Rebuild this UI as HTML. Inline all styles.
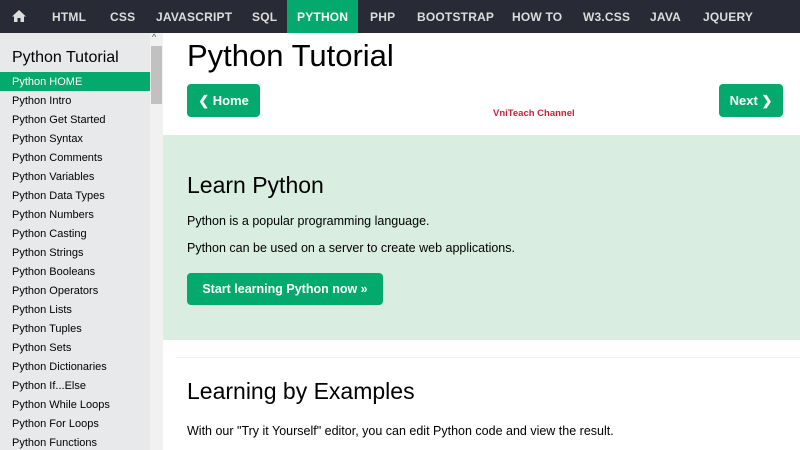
<!DOCTYPE html>
<html><head><meta charset="utf-8"><style>
*{margin:0;padding:0;box-sizing:border-box}
body{width:800px;height:450px;overflow:hidden;background:#fff;font-family:"Liberation Sans",sans-serif;position:relative;color:#000}
.nav{position:absolute;left:0;top:0;width:800px;height:33px;background:#282A35}
.nav span{position:absolute;top:10px;color:#ddd;font-weight:bold;font-size:12px;letter-spacing:0.2px}
.nav .act{position:absolute;left:287px;top:0;width:71px;height:33px;background:#04AA6D}
.side{position:absolute;left:0;top:33px;width:150px;height:417px;background:#E7E9EB}
.side div{position:absolute;left:12px;font-size:11px;color:#000}
.scroll{position:absolute;left:150px;top:33px;width:13px;height:417px;background:#f1f1f1}
.thumb{position:absolute;left:151px;top:46px;width:11px;height:58px;background:#c1c1c1}
.btn{position:absolute;background:#04AA6D;color:#fff;font-weight:bold;border-radius:4px;font-size:13px;text-align:center}
.abs{position:absolute}
</style></head><body>
<div class="nav">
<div class="act"></div>
<svg class="abs" style="left:11px;top:9px" width="16" height="14" viewBox="0 0 16 14"><path d="M8 1L1 7.5h2V13h3.5V9h3v4H13V7.5h2z" fill="#ddd"/></svg>
<span style="left:52px">HTML</span>
<span style="left:110px">CSS</span>
<span style="left:156px">JAVASCRIPT</span>
<span style="left:252px">SQL</span>
<span style="left:297px;color:#fff">PYTHON</span>
<span style="left:370px">PHP</span>
<span style="left:417px">BOOTSTRAP</span>
<span style="left:512px">HOW TO</span>
<span style="left:583px">W3.CSS</span>
<span style="left:650px">JAVA</span>
<span style="left:703px">JQUERY</span>
</div>
<div class="side">
<div style="top:16px;font-size:16px">Python Tutorial</div>
<div style="left:0;top:39px;width:150px;height:19px;background:#04AA6D"></div>
<div style="top:43px;color:#fff">Python HOME</div>
<div style="top:62px">Python Intro</div>
<div style="top:81px">Python Get Started</div>
<div style="top:100px">Python Syntax</div>
<div style="top:119px">Python Comments</div>
<div style="top:138px">Python Variables</div>
<div style="top:157px">Python Data Types</div>
<div style="top:176px">Python Numbers</div>
<div style="top:195px">Python Casting</div>
<div style="top:214px">Python Strings</div>
<div style="top:233px">Python Booleans</div>
<div style="top:252px">Python Operators</div>
<div style="top:271px">Python Lists</div>
<div style="top:290px">Python Tuples</div>
<div style="top:309px">Python Sets</div>
<div style="top:328px">Python Dictionaries</div>
<div style="top:347px">Python If...Else</div>
<div style="top:366px">Python While Loops</div>
<div style="top:385px">Python For Loops</div>
<div style="top:404px">Python Functions</div>
</div>
<div class="scroll"></div><div class="thumb"></div>
<div class="abs" style="left:152px;top:32px;font-size:9px;color:#555">^</div>
<div class="abs" style="left:187px;top:38px;font-size:31px">Python Tutorial</div>
<div class="btn" style="left:187px;top:84px;width:73px;height:33px;line-height:33px">❮ Home</div>
<div class="btn" style="left:719px;top:84px;width:64px;height:33px;line-height:33px">Next ❯</div>
<div class="abs" style="left:493px;top:108px;font-size:9.5px;font-weight:bold;color:#d0203a">VniTeach Channel</div>
<div class="abs" style="left:163px;top:135px;width:637px;height:205px;background:#D9EEE1"></div>
<div class="abs" style="left:187px;top:172px;font-size:23px">Learn Python</div>
<div class="abs" style="left:187px;top:214px;font-size:12.5px">Python is a popular programming language.</div>
<div class="abs" style="left:187px;top:241px;font-size:12.5px">Python can be used on a server to create web applications.</div>
<div class="btn" style="left:187px;top:273px;width:196px;height:32px;line-height:32px;font-size:12.5px">Start learning Python now »</div>
<div class="abs" style="left:176px;top:357px;width:624px;height:1px;background:#eee"></div>
<div class="abs" style="left:187px;top:378px;font-size:23px">Learning by Examples</div>
<div class="abs" style="left:187px;top:424px;font-size:12.5px">With our "Try it Yourself" editor, you can edit Python code and view the result.</div>
</body></html>
